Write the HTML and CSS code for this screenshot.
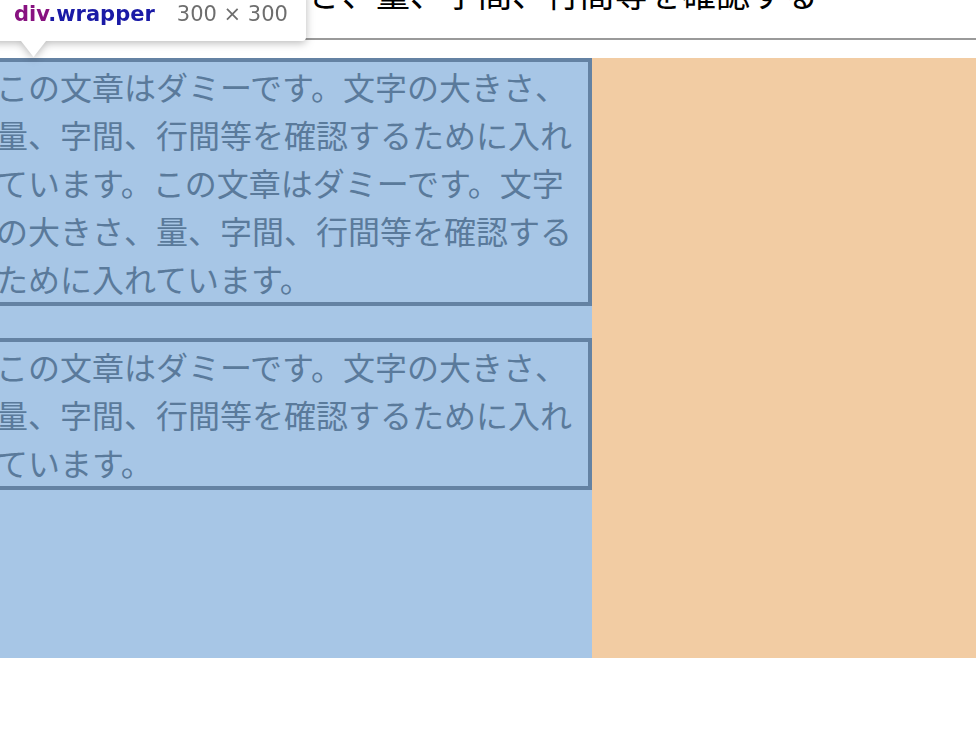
FILE: index.html
```html
<!DOCTYPE html>
<html lang="ja">
<head>
<meta charset="utf-8">
<link rel="stylesheet" href="styles.css">
</head>
<body>
<div class="page">
  <h1 class="title">さ、量、字間、行間等を確認する</h1>
  <div class="row">
    <div class="wrapper">
      <p class="box">この文章はダミーです。文字の大きさ、量、字間、行間等を確認するために入れています。この文章はダミーです。文字の大きさ、量、字間、行間等を確認するために入れています。</p>
      <p class="box">この文章はダミーです。文字の大きさ、量、字間、行間等を確認するために入れています。</p>
    </div>
    <div class="margin-area"></div>
  </div>
</div>
<div class="tooltip">
  <div class="tip-body"><span class="tag">div</span><span class="cls">.wrapper</span><span class="dims">300 × 300</span></div>
  <div class="tip-arrow"></div>
</div>
</body>
</html>
```
FILE: styles.css
```css
html, body {
  margin: 0;
  padding: 0;
  background: #ffffff;
  overflow: hidden;
}
body {
  width: 976px;
  height: 752px;
  position: relative;
  font-family: "Noto Sans CJK JP", sans-serif;
}
.page {
  display: flex;
  flex-direction: column;
}
.title {
  margin: -24px 0 18px 0;
  padding: 0 0 28px 308px;
  font-size: 34px;
  line-height: 34px;
  font-weight: 400;
  color: #000;
  white-space: nowrap;
  border-bottom: 2px solid #9a9a9a;
}
.row {
  display: flex;
  height: 600px;
}
.wrapper {
  width: 600px;
  flex: none;
  margin-left: -8px;
  background: #a7c6e6;
}
.margin-area {
  flex: 1;
  background: #f2cca3;
}
.box {
  margin: 0 0 32px 0;
  padding: 0;
  border: 4px solid #6482a3;
  font-size: 32px;
  line-height: 48px;
  color: #5a7a9b;
}
.tooltip {
  position: absolute;
  left: -10px;
  top: -10px;
  filter: drop-shadow(0 2px 4px rgba(0, 0, 0, 0.28));
}
.tip-body {
  width: 316px;
  height: 51px;
  box-sizing: border-box;
  background: #fff;
  border-radius: 4px;
  padding: 11px 0 0 24px;
  font-family: "DejaVu Sans", sans-serif;
  font-size: 21px;
  line-height: 26px;
  white-space: nowrap;
}
.tag {
  color: #881280;
  font-weight: 700;
}
.cls {
  color: #1a1aa6;
  font-weight: 700;
}
.dims {
  color: #6e6e6e;
  margin-left: 22px;
}
.tip-arrow {
  width: 25px;
  height: 16px;
  margin-left: 31px;
  background: #fff;
  clip-path: polygon(0 0, 100% 0, 50% 100%);
}
```
